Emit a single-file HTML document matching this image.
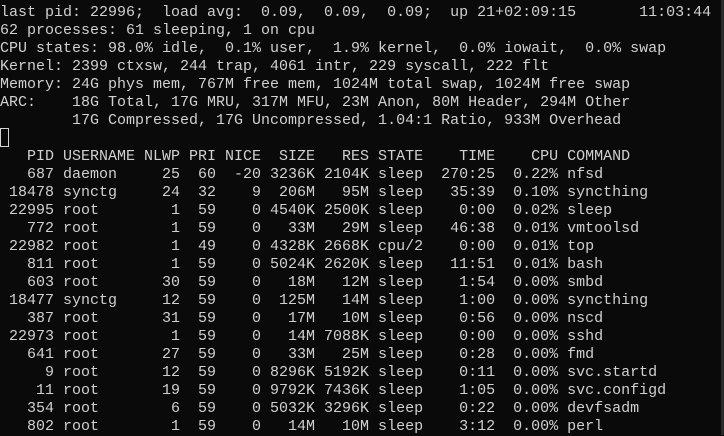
<!DOCTYPE html>
<html><head><style>
html,body{margin:0;padding:0;background:#0a0a0a;width:724px;height:435px;overflow:hidden}
pre{margin:0;position:absolute;left:0;top:4px;font-family:"Liberation Mono","DejaVu Sans Mono",monospace;font-size:15px;line-height:18px;color:#d0d0d0;white-space:pre}
.cur{position:absolute;left:0;top:128px;width:7px;height:17px;border:1px solid #d4d4d4}
.sb{position:absolute;right:0;top:0;width:3px;height:435px;background:#2a2a2a}
</style></head><body>
<pre>last pid: 22996;  load avg:  0.09,  0.09,  0.09;  up 21+02:09:15       11:03:44
62 processes: 61 sleeping, 1 on cpu
CPU states: 98.0% idle,  0.1% user,  1.9% kernel,  0.0% iowait,  0.0% swap
Kernel: 2399 ctxsw, 244 trap, 4061 intr, 229 syscall, 222 flt
Memory: 24G phys mem, 767M free mem, 1024M total swap, 1024M free swap
ARC:    18G Total, 17G MRU, 317M MFU, 23M Anon, 80M Header, 294M Other
        17G Compressed, 17G Uncompressed, 1.04:1 Ratio, 933M Overhead

   PID USERNAME NLWP PRI NICE  SIZE   RES STATE    TIME    CPU COMMAND
   687 daemon     25  60  -20 3236K 2104K sleep  270:25  0.22% nfsd
 18478 synctg     24  32    9  206M   95M sleep   35:39  0.10% syncthing
 22995 root        1  59    0 4540K 2500K sleep    0:00  0.02% sleep
   772 root        1  59    0   33M   29M sleep   46:38  0.01% vmtoolsd
 22982 root        1  49    0 4328K 2668K cpu/2    0:00  0.01% top
   811 root        1  59    0 5024K 2620K sleep   11:51  0.01% bash
   603 root       30  59    0   18M   12M sleep    1:54  0.00% smbd
 18477 synctg     12  59    0  125M   14M sleep    1:00  0.00% syncthing
   387 root       31  59    0   17M   10M sleep    0:56  0.00% nscd
 22973 root        1  59    0   14M 7088K sleep    0:00  0.00% sshd
   641 root       27  59    0   33M   25M sleep    0:28  0.00% fmd
     9 root       12  59    0 8296K 5192K sleep    0:11  0.00% svc.startd
    11 root       19  59    0 9792K 7436K sleep    1:05  0.00% svc.configd
   354 root        6  59    0 5032K 3296K sleep    0:22  0.00% devfsadm
   802 root        1  59    0   14M   10M sleep    3:12  0.00% perl</pre>
<div class="cur"></div>
<div class="sb"></div>
</body></html>
